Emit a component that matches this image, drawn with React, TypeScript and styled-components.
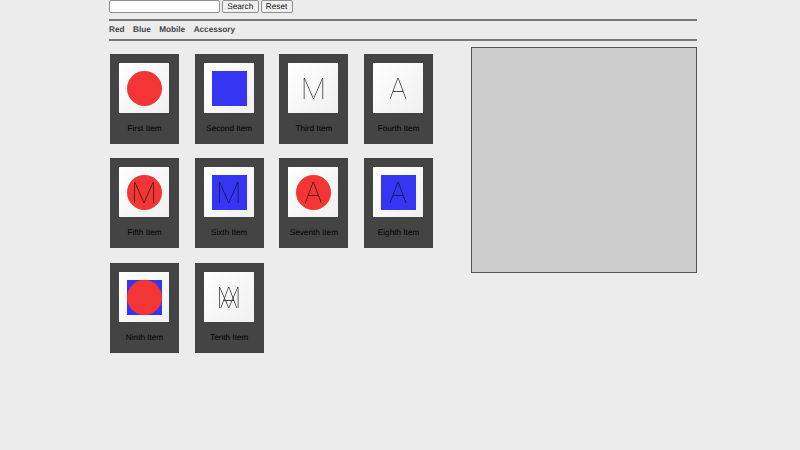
import React from 'react';
import styled, { createGlobalStyle } from 'styled-components';

const GlobalStyle = createGlobalStyle`
  html, body {
    margin: 0;
    padding: 0;
    background: #ececec;
    font-family: 'Liberation Sans', Arial, sans-serif;
    text-rendering: geometricPrecision;
  }
`;

const Page = styled.div`
  width: 588px;
  margin-left: 109px;
`;

const SearchBar = styled.form`
  display: flex;
  align-items: flex-start;
  height: 19px;
  gap: 2px;
`;

const SearchInput = styled.input`
  box-sizing: border-box;
  width: 111px;
  height: 13px;
  margin: 0;
  padding: 0 2px;
  background: #fff;
  border: 1px solid #8f8f8f;
  border-radius: 2px;
`;

const FormButton = styled.button`
  box-sizing: border-box;
  height: 13px;
  padding: 0 4.3px;
  font: 8.2px 'Liberation Sans', Arial, sans-serif;
  text-rendering: geometricPrecision;
  color: #111;
  background: #efefef;
  border: 1px solid #8f8f8f;
  border-radius: 2px;
`;

const Rule = styled.hr`
  height: 2px;
  margin: 0;
  border: 0;
  background: #777;
`;

const Filters = styled.nav`
  display: flex;
  align-items: center;
  gap: 8.5px;
  height: 18px;
`;

const FilterLink = styled.a`
  font-size: 8.2px;
  line-height: 16px;
  margin-bottom: 1px;
  font-weight: 700;
  color: #444;
`;

const Content = styled.main`
  display: flex;
  justify-content: space-between;
  align-items: flex-start;
  padding-top: 6px;
`;

const ItemGrid = styled.div`
  display: grid;
  grid-template-columns: repeat(4, 69px);
  column-gap: 15.7px;
  row-gap: 14.4px;
  padding: 7px 0 0 1px;
`;

const Card = styled.div`
  width: 69px;
  height: 90px;
  padding-top: 9px;
  box-sizing: border-box;
  background: #444;
  display: flex;
  flex-direction: column;
  align-items: center;
`;

const Thumb = styled.div`
  position: relative;
  align-self: flex-start;
  margin-left: 9px;
  width: 50px;
  height: 50px;
  background: linear-gradient(135deg, #ffffff 0%, #f0f0f0 100%);
`;

const Shape = styled.div<{ $kind: 'circle' | 'square' }>`
  position: absolute;
  top: 8px;
  left: 8px;
  width: 35px;
  height: 35px;
  background: ${p => (p.$kind === 'circle' ? '#f33535' : '#3535f3')};
  border-radius: ${p => (p.$kind === 'circle' ? '50%' : '0')};
`;

const Letter = styled.span`
  position: absolute;
  inset: 1px 0 0;
  display: flex;
  align-items: center;
  justify-content: center;
  font-family: Inter, Lato, sans-serif;
  font-weight: 100;
  font-size: 29px;
  line-height: 1;
  color: #111;
  transform: translateZ(0);
`;

const Label = styled.div`
  margin-top: 10px;
  font-size: 8.2px;
  line-height: 11px;
  color: #000;
  white-space: nowrap;
`;

const Preview = styled.aside`
  box-sizing: border-box;
  width: 226px;
  height: 226px;
  background: #ccc;
  border: 1px solid #555;
`;

type Item = { name: string; shapes: ('circle' | 'square')[]; letters: string[] };

const items: Item[] = [
  { name: 'First Item', shapes: ['circle'], letters: [] },
  { name: 'Second Item', shapes: ['square'], letters: [] },
  { name: 'Third Item', shapes: [], letters: ['M'] },
  { name: 'Fourth Item', shapes: [], letters: ['A'] },
  { name: 'Fifth Item', shapes: ['circle'], letters: ['M'] },
  { name: 'Sixth Item', shapes: ['square'], letters: ['M'] },
  { name: 'Seventh Item', shapes: ['circle'], letters: ['A'] },
  { name: 'Eighth Item', shapes: ['square'], letters: ['A'] },
  { name: 'Ninth Item', shapes: ['square', 'circle'], letters: [] },
  { name: 'Tenth Item', shapes: [], letters: ['M', 'A'] },
];

const filters = ['Red', 'Blue', 'Mobile', 'Accessory'];

export default function App() {
  return (
    <Page>
      <GlobalStyle />
      <SearchBar onSubmit={e => e.preventDefault()}>
        <SearchInput type="text" />
        <FormButton type="submit">Search</FormButton>
        <FormButton type="reset">Reset</FormButton>
      </SearchBar>
      <Rule />
      <Filters>
        {filters.map(f => (
          <FilterLink key={f}>{f}</FilterLink>
        ))}
      </Filters>
      <Rule />
      <Content>
        <ItemGrid>
          {items.map(item => (
            <Card key={item.name}>
              <Thumb>
                {item.shapes.map(s => (
                  <Shape key={s} $kind={s} />
                ))}
                {item.letters.map(l => (
                  <Letter key={l}>{l}</Letter>
                ))}
              </Thumb>
              <Label>{item.name}</Label>
            </Card>
          ))}
        </ItemGrid>
        <Preview />
      </Content>
    </Page>
  );
}
